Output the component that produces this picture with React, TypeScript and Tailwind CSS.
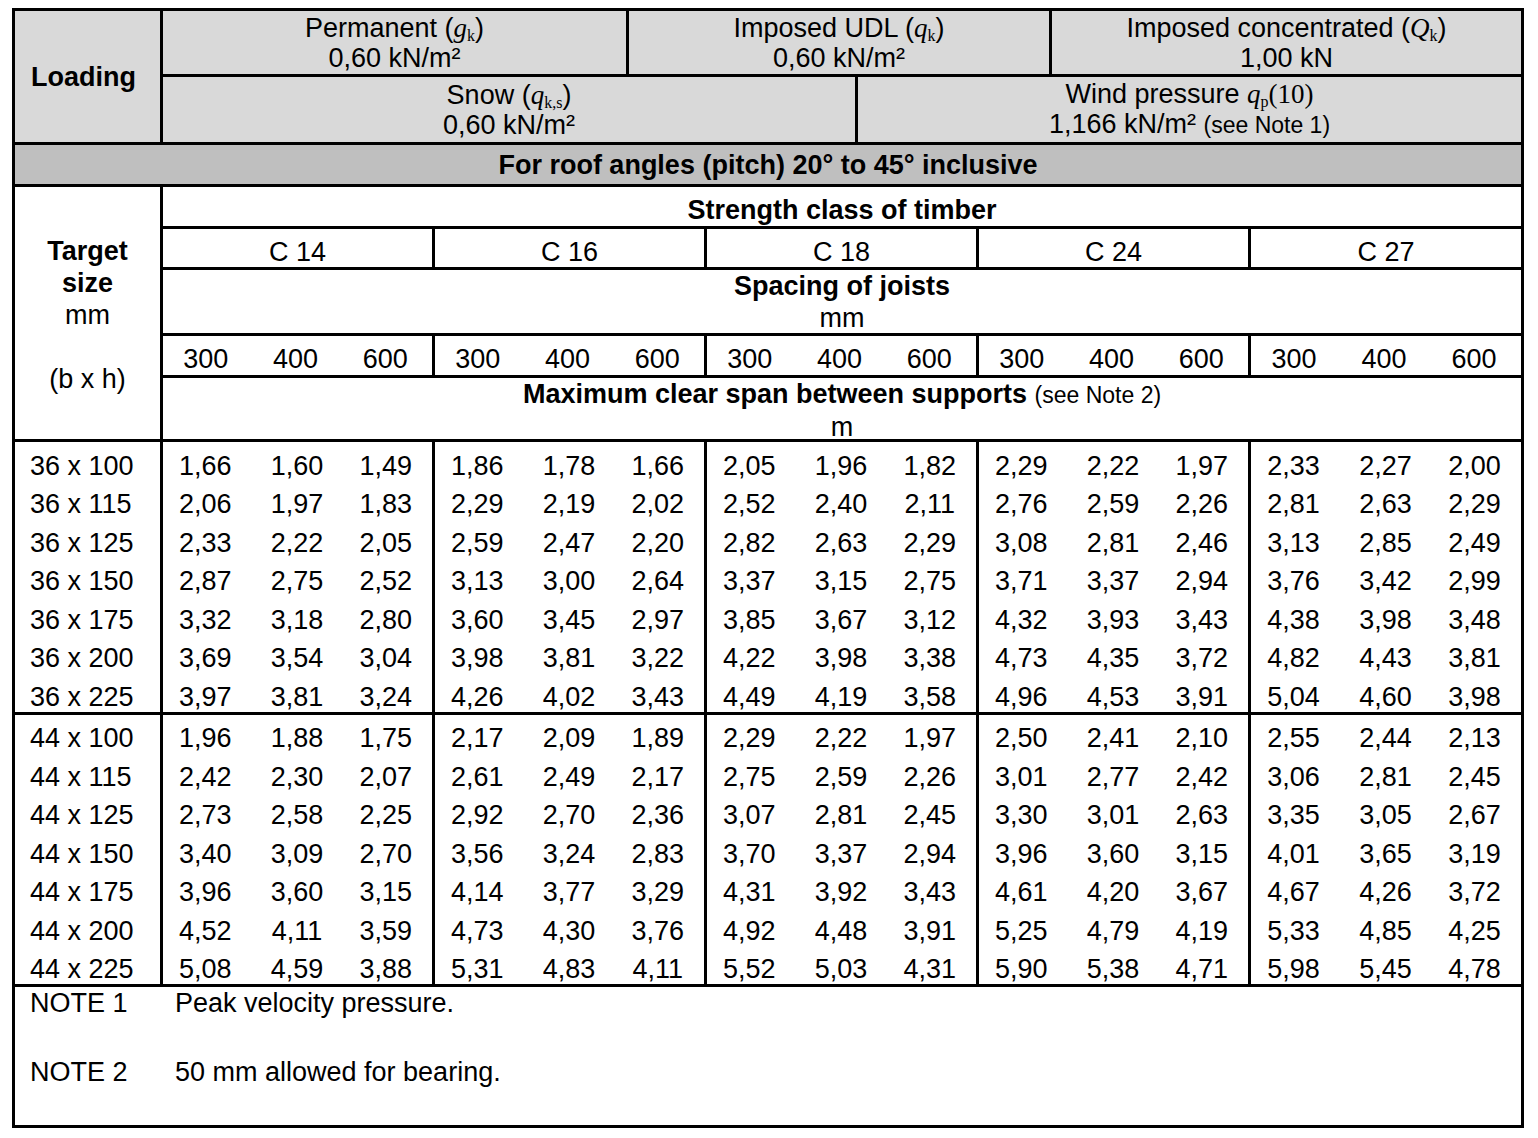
import React from "react";

const rows36: [string, string[]][] = [
  ["36 x 100", ["1,66", "1,60", "1,49", "1,86", "1,78", "1,66", "2,05", "1,96", "1,82", "2,29", "2,22", "1,97", "2,33", "2,27", "2,00"]],
  ["36 x 115", ["2,06", "1,97", "1,83", "2,29", "2,19", "2,02", "2,52", "2,40", "2,11", "2,76", "2,59", "2,26", "2,81", "2,63", "2,29"]],
  ["36 x 125", ["2,33", "2,22", "2,05", "2,59", "2,47", "2,20", "2,82", "2,63", "2,29", "3,08", "2,81", "2,46", "3,13", "2,85", "2,49"]],
  ["36 x 150", ["2,87", "2,75", "2,52", "3,13", "3,00", "2,64", "3,37", "3,15", "2,75", "3,71", "3,37", "2,94", "3,76", "3,42", "2,99"]],
  ["36 x 175", ["3,32", "3,18", "2,80", "3,60", "3,45", "2,97", "3,85", "3,67", "3,12", "4,32", "3,93", "3,43", "4,38", "3,98", "3,48"]],
  ["36 x 200", ["3,69", "3,54", "3,04", "3,98", "3,81", "3,22", "4,22", "3,98", "3,38", "4,73", "4,35", "3,72", "4,82", "4,43", "3,81"]],
  ["36 x 225", ["3,97", "3,81", "3,24", "4,26", "4,02", "3,43", "4,49", "4,19", "3,58", "4,96", "4,53", "3,91", "5,04", "4,60", "3,98"]],
];

const rows44: [string, string[]][] = [
  ["44 x 100", ["1,96", "1,88", "1,75", "2,17", "2,09", "1,89", "2,29", "2,22", "1,97", "2,50", "2,41", "2,10", "2,55", "2,44", "2,13"]],
  ["44 x 115", ["2,42", "2,30", "2,07", "2,61", "2,49", "2,17", "2,75", "2,59", "2,26", "3,01", "2,77", "2,42", "3,06", "2,81", "2,45"]],
  ["44 x 125", ["2,73", "2,58", "2,25", "2,92", "2,70", "2,36", "3,07", "2,81", "2,45", "3,30", "3,01", "2,63", "3,35", "3,05", "2,67"]],
  ["44 x 150", ["3,40", "3,09", "2,70", "3,56", "3,24", "2,83", "3,70", "3,37", "2,94", "3,96", "3,60", "3,15", "4,01", "3,65", "3,19"]],
  ["44 x 175", ["3,96", "3,60", "3,15", "4,14", "3,77", "3,29", "4,31", "3,92", "3,43", "4,61", "4,20", "3,67", "4,67", "4,26", "3,72"]],
  ["44 x 200", ["4,52", "4,11", "3,59", "4,73", "4,30", "3,76", "4,92", "4,48", "3,91", "5,25", "4,79", "4,19", "5,33", "4,85", "4,25"]],
  ["44 x 225", ["5,08", "4,59", "3,88", "5,31", "4,83", "4,11", "5,52", "5,03", "4,31", "5,90", "5,38", "4,71", "5,98", "5,45", "4,78"]],
];

const groups = ["C 14", "C 16", "C 18", "C 24", "C 27"];

function M({ v, s }: { v: string; s: string }) {
  return (
    <>
      <span className="font-['Liberation_Serif',serif] italic">{v}</span>
      <sub className="font-['Liberation_Serif',serif] text-[16px] leading-none">{s}</sub>
    </>
  );
}

function groupClass(g: number) {
  return g < 4 ? "w-[272px] border-r-[3px] border-black flex" : "flex-1 flex";
}

function DataRow({ label, vals }: { label: string; vals: string[] }) {
  return (
    <div className="flex flex-1 leading-none">
      <div className="w-[148px] border-r-[3px] border-black pl-[15px] flex items-end pb-[1px]">{label}</div>
      {[0, 1, 2, 3, 4].map((g) => (
        <div key={g} className={groupClass(g)}>
          {vals.slice(g * 3, g * 3 + 3).map((v, i) => (
            <div
              key={i}
              className={
                i === 0
                  ? "flex-1 flex items-end justify-center pb-[1px] pr-[7px]"
                  : "flex-1 flex items-end justify-center pb-[1px] pr-[4px]"
              }
            >
              {v}
            </div>
          ))}
        </div>
      ))}
    </div>
  );
}

export default function App() {
  return (
    <div className="min-h-screen bg-white pl-[12px] pt-[8px] text-black font-['Liberation_Sans',Arial,sans-serif] text-[27px]">
      <div className="w-[1512px] h-[1120px] border-[3px] border-black flex flex-col">
        {/* Loading header */}
        <div className="flex h-[134px] border-b-[3px] border-black bg-[#d9d9d9] leading-[30px]">
          <div className="w-[148px] border-r-[3px] border-black flex items-center pl-[16px] font-bold">Loading</div>
          <div className="flex-1 flex flex-col">
            <div className="h-[66px] border-b-[3px] border-black flex">
              <div className="w-[466px] border-r-[3px] border-black flex flex-col items-center justify-center">
                <div>
                  Permanent (<M v="g" s="k" />)
                </div>
                <div>0,60 kN/m²</div>
              </div>
              <div className="w-[423px] border-r-[3px] border-black flex flex-col items-center justify-center">
                <div>
                  Imposed UDL (<M v="q" s="k" />)
                </div>
                <div>0,60 kN/m²</div>
              </div>
              <div className="flex-1 flex flex-col items-center justify-center">
                <div>
                  Imposed concentrated (<M v="Q" s="k" />)
                </div>
                <div>1,00 kN</div>
              </div>
            </div>
            <div className="flex-1 flex">
              <div className="w-[695px] border-r-[3px] border-black flex flex-col items-center justify-center">
                <div>
                  Snow (<M v="q" s="k,s" />)
                </div>
                <div>0,60 kN/m²</div>
              </div>
              <div className="flex-1 flex flex-col items-center justify-center">
                <div>
                  Wind pressure <M v="q" s="p" />
                  <span className="font-['Liberation_Serif',serif]">(10)</span>
                </div>
                <div>
                  1,166 kN/m² <span className="text-[23px]">(see Note 1)</span>
                </div>
              </div>
            </div>
          </div>
        </div>

        {/* Band */}
        <div className="h-[42px] border-b-[3px] border-black bg-[#bfbfbf] flex items-center justify-center font-bold leading-[32px]">
          For roof angles (pitch) 20° to 45° inclusive
        </div>

        {/* Column headers */}
        <div className="flex h-[255px] border-b-[3px] border-black leading-[32px]">
          <div className="w-[148px] border-r-[3px] border-black flex flex-col items-center justify-center pt-[3px]">
            <div className="font-bold">Target</div>
            <div className="font-bold">size</div>
            <div>mm</div>
            <div>&nbsp;</div>
            <div>(b x h)</div>
          </div>
          <div className="flex-1 flex flex-col">
            <div className="h-[42px] border-b-[3px] border-black flex justify-center pt-[7px] font-bold">
              Strength class of timber
            </div>
            <div className="h-[41px] border-b-[3px] border-black flex">
              {groups.map((g, i) => (
                <div key={g} className={groupClass(i) + " justify-center pt-[7px]"}>
                  {g}
                </div>
              ))}
            </div>
            <div className="h-[66px] border-b-[3px] border-black flex flex-col items-center justify-center">
              <div className="font-bold">Spacing of joists</div>
              <div>mm</div>
            </div>
            <div className="h-[42px] border-b-[3px] border-black flex">
              {groups.map((g, i) => (
                <div key={g} className={groupClass(i)}>
                  {["300", "400", "600"].map((s) => (
                    <div key={s} className="flex-1 flex justify-center pt-[7px] pr-[4px]">
                      {s}
                    </div>
                  ))}
                </div>
              ))}
            </div>
            <div className="flex-1 flex flex-col items-center justify-center">
              <div>
                <span className="font-bold">Maximum clear span between supports</span>{" "}
                <span className="text-[23px]">(see Note 2)</span>
              </div>
              <div>m</div>
            </div>
          </div>
        </div>

        {/* 36 block */}
        <div className="h-[273px] border-b-[3px] border-black flex flex-col">
          {rows36.map(([l, v]) => (
            <DataRow key={l} label={l} vals={v} />
          ))}
        </div>

        {/* 44 block */}
        <div className="h-[272px] border-b-[3px] border-black flex flex-col">
          {rows44.map(([l, v]) => (
            <DataRow key={l} label={l} vals={v} />
          ))}
        </div>

        {/* Notes */}
        <div className="flex-1 flex flex-col gap-[37px] leading-[32px] pl-[15px]">
          <div className="flex">
            <div className="w-[145px]">NOTE 1</div>
            <div>Peak velocity pressure.</div>
          </div>
          <div className="flex">
            <div className="w-[145px]">NOTE 2</div>
            <div>50 mm allowed for bearing.</div>
          </div>
        </div>
      </div>
    </div>
  );
}
